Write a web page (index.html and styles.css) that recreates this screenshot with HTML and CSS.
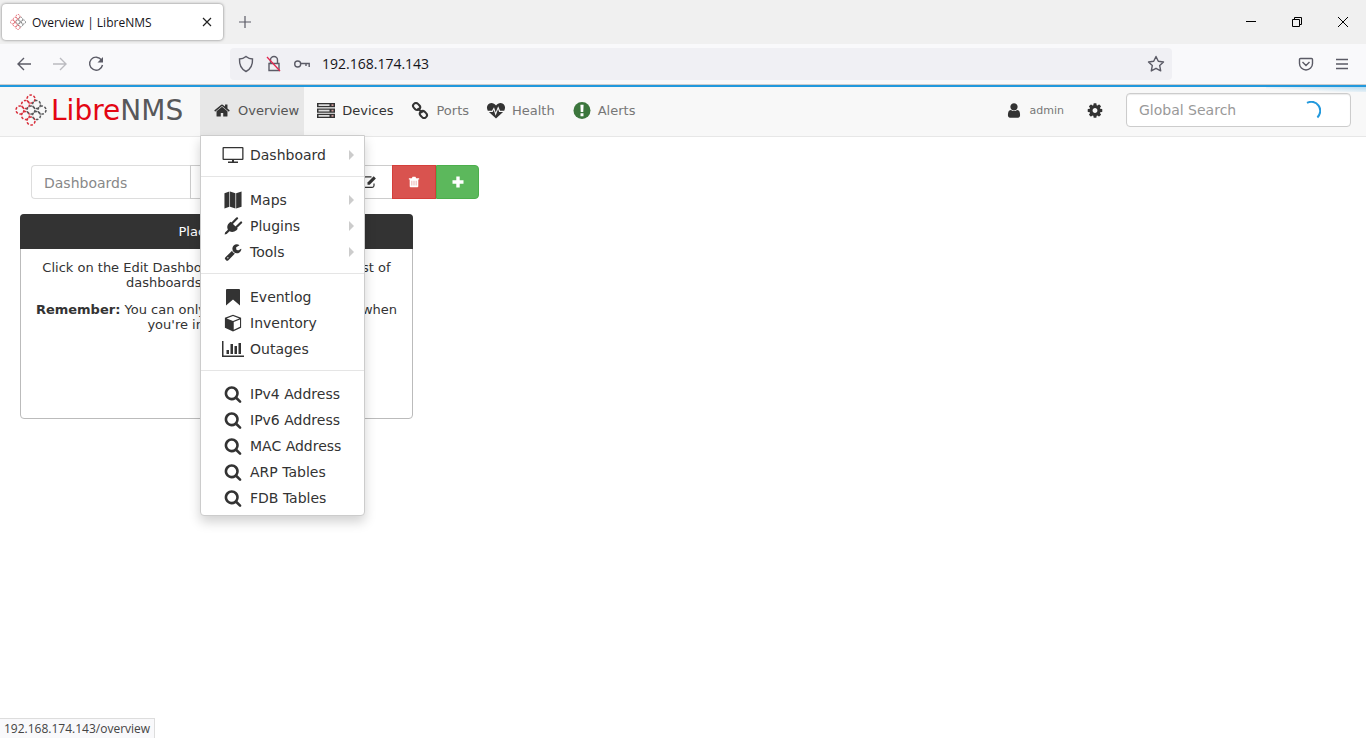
FILE: index.html
```
<!DOCTYPE html>
<html lang="en">
	<head>
		<meta charset="utf-8" />
		<title>Overview | LibreNMS</title>
		<link rel="stylesheet" href="styles.css">
	</head>

	<body>
	<!-- shared icons -->
	<svg class="sprite" aria-hidden="true">
		<symbol id="i-logo" viewBox="0 0 32 32">
			<g fill="none" stroke-width="1.500" stroke-dasharray="2.600 1.590">
				<g stroke="#d9303c">
					<circle cx="16" cy="5" r="4"/>
					<circle cx="10.500" cy="10.500" r="4"/>
					<circle cx="5" cy="16" r="4"/>
					<circle cx="10.500" cy="21.500" r="4"/>
					<circle cx="16" cy="27" r="4"/>
				</g>
				<g stroke="#57585a">
					<circle cx="21.500" cy="10.500" r="4"/>
					<circle cx="16" cy="16" r="4"/>
					<circle cx="27" cy="16" r="4"/>
					<circle cx="21.500" cy="21.500" r="4"/>
				</g>
			</g>
		</symbol>
		<symbol id="i-home" viewBox="0 0 1792 1792"><path d="M1472 992v480q0 26-19 45t-45 19h-384v-384h-256v384h-384q-26 0-45-19t-19-45v-480q0-1 .5-3t.5-3l575-474 575 474q1 2 1 6zm223-69l-62 74q-8 9-21 11h-3q-13 0-21-7l-692-577-692 577q-12 8-24 7-13-2-21-11l-62-74q-8-10-7-23.500t11-21.500l719-599q32-26 76-26t76 26l244 204v-195q0-14 9-23t23-9h192q14 0 23 9t9 23v408l219 182q10 8 11 21.500t-7 23.500z"/></symbol>
		<symbol id="i-server" viewBox="0 0 20 16"><path d="M1 .5h18v4.300H1zM1 5.900h18v4.300H1zM1 11.300h18v4.300H1z"/><path fill="#ddd" d="M2.500 1.800h11v1.700h-11zM2.500 7.200h11v1.700h-11zM2.500 12.600h11v1.700h-11z"/><path fill="#c99" d="M15.500 1.800h2v1.700h-2zM15.500 7.200h2v1.700h-2zM15.500 12.600h2v1.700h-2z"/></symbol>
		<symbol id="i-link" viewBox="0 0 18 18"><g fill="none" stroke="currentColor" stroke-width="2.200"><rect x="1.400" y="1.800" width="8" height="6" rx="3" transform="rotate(45 5.400 4.800)"/><rect x="8.600" y="10.200" width="8" height="6" rx="3" transform="rotate(45 12.600 13.200)"/><path d="M6.500 6.500l5 5"/></g></symbol>
		<symbol id="i-heart" viewBox="0 0 20 18"><path d="M10 17.500L2.500 10.500H6.500L7.600 8.200L9.600 14.500L12.200 7.500L13.300 10.500H17.500zM1.300 9.200C-.8 5.500 1 1 5 1c2.200 0 3.700 1 5 2.600C11.300 2 12.800 1 15 1c4 0 5.800 4.500 3.700 8.200H14.300L12.300 4.500L9.700 11L7.900 5.500L5.700 9.200z"/></symbol>
		<symbol id="i-alert" viewBox="0 0 16 16"><circle cx="8" cy="8" r="8"/><path fill="#fff" d="M6.500 2.500h3l-.3 6.900H6.800zM6.600 10.600h2.800v2.700H6.600z"/></symbol>
		<symbol id="i-user" viewBox="0 0 1792 1792"><path d="M1536 1399q0 109-62.500 187t-150.500 78h-854q-88 0-150.500-78t-62.500-187q0-85 8.500-160.500t31.500-152 58.500-131 94-89 134.500-34.500q131 128 313 128t313-128q76 0 134.500 34.500t94 89 58.500 131 31.500 152 8.500 160.500zm-256-887q0 159-112.500 271.500t-271.500 112.500-271.500-112.500-112.500-271.500 112.500-271.500 271.500-112.500 271.500 112.500 112.500 271.500z"/></symbol>
		<symbol id="i-cog" viewBox="0 0 1792 1792"><path d="M1152 896q0-106-75-181t-181-75-181 75-75 181 75 181 181 75 181-75 75-181zm512-109v222q0 12-8 23t-20 13l-185 28q-19 54-39 91 35 50 107 138 10 12 10 25t-9 23q-27 37-99 108t-94 71q-12 0-26-9l-138-108q-44 23-91 38-16 136-29 186-7 28-36 28h-222q-14 0-24.500-8.500t-11.500-21.500l-28-184q-49-16-90-37l-141 107q-10 9-25 9-14 0-25-11-126-114-165-168-7-10-7-23 0-12 8-23 15-21 51-66.500t54-70.500q-27-50-41-99l-183-27q-13-2-21-12.500t-8-23.500v-222q0-12 8-23t19-13l186-28q14-46 39-92-40-57-107-138-10-12-10-24 0-10 9-23 26-36 98.500-107.500t94.500-71.500q13 0 26 10l138 107q44-23 91-38 16-136 29-186 7-28 36-28h222q14 0 24.500 8.500t11.500 21.500l28 184q49 16 90 37l142-107q9-9 24-9 13 0 25 10 129 119 165 170 7 8 7 22 0 12-8 23-15 21-51 66.500t-54 70.500q26 50 41 98l183 28q13 2 21 12.500t8 23.500z"/></symbol>
		<symbol id="i-desktop" viewBox="0 0 22 18"><path fill-rule="evenodd" d="M1.500 1h19q1 0 1 1v11q0 1-1 1h-8.500v1.500h4V17H6v-1.500h4V14H1.500q-1 0-1-1V2q0-1 1-1zM1.800 2.300v10.400h18.400V2.300z"/></symbol>
		<symbol id="i-map" viewBox="0 0 20 20"><path d="M.5 2.500L6 .5v17l-5.500 2zM6.700.5l6 2v17l-6-2zM13.500 2.500l6-2v17l-6 2z"/></symbol>
		<symbol id="i-plug" viewBox="0 0 20 20"><path d="M6 6.500l1.500-1.200 7.800 7.700-1.400 1.600q-3.900 3.300-7.800 1.200L3 18.900l-2.300.6.500-2.300L4.300 14.100q-2-4.100 1.700-7.600z"/><path d="M8.500 7.500L14.500 1.500M13 12l6-6" fill="none" stroke="currentColor" stroke-width="2.400" stroke-linecap="round"/></symbol>
		<symbol id="i-wrench" viewBox="0 0 1792 1792"><path d="M448 1472q0-26-19-45t-45-19-45 19-19 45 19 45 45 19 45-19 19-45zm644-420l-682 682q-37 37-90 37-52 0-91-37l-106-108q-38-36-38-90 0-53 38-91l681-681q39 98 114.500 173.500t173.500 114.500zm634-435q0 39-23 106-47 134-164.500 217.500t-258.500 83.500q-185 0-316.500-131.500t-131.500-316.500 131.500-316.500 316.500-131.500q58 0 121.500 16.500t107.500 46.500q16 11 16 28t-16 28l-293 169v224l193 107q5-3 79-48.500t135.500-81 70.500-35.500q15 0 23.500 10t8.500 25z"/></symbol>
		<symbol id="i-bookmark" viewBox="0 0 14 18"><path d="M1 1h12q1 0 1 1v15.500L7 11.500 0 17.500V2q0-1 1-1z"/></symbol>
		<symbol id="i-cube" viewBox="0 0 20 20"><path fill-rule="evenodd" d="M10 .8l9 3.500v11L10 19.500 1 15.300v-11zM10 2.200L3 4.900l7 2.800 7-2.800zM10.800 9v8.500l7-3.200V6.200z"/></symbol>
		<symbol id="i-chart" viewBox="0 0 22 18"><path d="M0 1h1.500v14.500H22V17H0zM4.500 10H7v4H4.500zM8.500 4H11v10H8.500zM12.500 6H15v8h-2.500zM16.500 3H19v11h-2.500z"/></symbol>
		<symbol id="i-search" viewBox="0 0 1792 1792"><path d="M1216 832q0-185-131.500-316.500t-316.500-131.500-316.500 131.500-131.500 316.500 131.500 316.500 316.500 131.500 316.500-131.500 131.500-316.500zm512 832q0 52-38 90t-90 38q-54 0-90-38l-343-342q-179 124-399 124-143 0-273.500-55.500t-225-150-150-225-55.500-273.500 55.500-273.500 150-225 225-150 273.500-55.500 273.500 55.500 225 150 150 225 55.500 273.500q0 220-124 399l343 343q37 37 37 90z"/></symbol>
		<symbol id="i-edit" viewBox="0 0 14 14"><path d="M11 8.500v2q0 1.800-1.800 1.800H2.500Q.8 12.300.8 10.500v-7Q.8 1.800 2.500 1.800h6" fill="none" stroke="currentColor" stroke-width="1.200"/><path d="M4.500 7.500L10.700 1.300l2.200 2.200-6.200 6.200H4.500z"/></symbol>
		<symbol id="i-trash" viewBox="0 0 12 14"><path fill-rule="evenodd" d="M4.300 1h3.400l.8 1.500H12V4h-1v8q0 1-1 1H2q-1 0-1-1V4H0V2.500h3.500z"/><path fill="#e5a5a3" d="M3 5.500h1v5.500H3zM5.500 5.500h1v5.500h-1zM8 5.500h1v5.500H8z"/></symbol>
		<symbol id="i-plus" viewBox="0 0 12 12"><path d="M4.300.5h3.400v3.800h3.800v3.400H7.700v3.800H4.300V7.700H.5V4.300h3.800z"/></symbol>
	</svg>

	<!-- browser window -->
	<div class="tabbar">
		<div class="tab">
			<svg class="favicon"><use href="#i-logo"/></svg>
			<span class="tab-title">Overview | LibreNMS</span>
			<button class="plain" aria-label="Close tab"><svg width="16" height="16" viewBox="0 0 16 16"><path d="M4 4l8 8M12 4l-8 8" stroke="#222" stroke-width="1.200"/></svg></button>
		</div>
		<button class="plain newtab" aria-label="New tab"><svg width="16" height="16" viewBox="0 0 16 16"><path d="M8 2v12M2 8h12" stroke="#5b5b66" stroke-width="1.200"/></svg></button>
		<div class="window-buttons">
			<button class="plain" aria-label="Minimize"><svg width="12" height="12" viewBox="0 0 12 12"><path d="M1 5.500h10" stroke="#000"/></svg></button>
			<button class="plain" aria-label="Restore"><svg width="12" height="12" viewBox="0 0 12 12"><path d="M1.500 3.500h7v7h-7zM3.500 3V1.500h7v7H9" fill="none" stroke="#000"/></svg></button>
			<button class="plain" aria-label="Close"><svg width="12" height="12" viewBox="0 0 12 12"><path d="M1 1l10 10M11 1L1 11" stroke="#000"/></svg></button>
		</div>
	</div>
	<div class="toolbar">
		<div class="history">
			<button class="plain" aria-label="Back"><svg width="16" height="16" viewBox="0 0 16 16"><path d="M15 8H2M8 2L2 8l6 6" fill="none" stroke="#5b5b66" stroke-width="1.400"/></svg></button>
			<button class="plain" aria-label="Forward"><svg width="16" height="16" viewBox="0 0 16 16"><path d="M1 8h13M8 2l6 6-6 6" fill="none" stroke="#bbbbc0" stroke-width="1.400"/></svg></button>
			<button class="plain" aria-label="Reload"><svg width="16" height="16" viewBox="0 0 16 16"><path d="M13.500 4A6.500 6.500 0 1 0 14.500 9" fill="none" stroke="#5b5b66" stroke-width="1.400"/><path d="M15 1v5.500H9.500z" fill="#5b5b66"/></svg></button>
		</div>
		<div class="urlbar">
			<svg width="16" height="18" viewBox="0 0 16 18"><path d="M8 1.500q3 2.500 6.500 2.500Q15 13 8 16.500 1 13 1.500 4 5 4 8 1.500z" fill="none" stroke="#5b5b66" stroke-width="1.400"/></svg>
			<svg width="16" height="18" viewBox="0 0 16 18"><path d="M4.500 8V5a3.500 3.500 0 0 1 7 0v3M3 8.500h10v7H3z" fill="none" stroke="#5b5b66" stroke-width="1.400"/><path d="M1 2l13 14" stroke="#e22850" stroke-width="1.300"/></svg>
			<svg width="16" height="18" viewBox="0 0 16 18"><path d="M.7 9a3 3 0 1 0 6 0a3 3 0 1 0-6 0M6.700 8.500h8.500V12M12 8.500V11" fill="none" stroke="#5b5b66" stroke-width="1.400"/></svg>
			<input type="text" aria-label="Address" value="192.168.174.143">
			<button class="plain" aria-label="Bookmark"><svg width="18" height="18" viewBox="0 0 18 18"><path d="M9 1.500l2.300 4.800 5.200.7-3.800 3.600 1 5.300L9 13.300l-4.700 2.600 1-5.300L1.500 7l5.200-.7z" fill="none" stroke="#5b5b66" stroke-width="1.400" stroke-linejoin="round"/></svg></button>
		</div>
		<div class="tools">
			<button class="plain" aria-label="Pocket"><svg width="16" height="16" viewBox="0 0 16 16"><path d="M2.500 2.500h11q1 0 1 1V7.500a6.500 6.500 0 0 1-13 0V3.500q0-1 1-1zM4.500 6L8 9.500 11.500 6" fill="none" stroke="#5b5b66" stroke-width="1.400"/></svg></button>
			<button class="plain" aria-label="Menu"><svg width="16" height="16" viewBox="0 0 16 16"><path d="M2 3.500h12M2 8h12M2 12.500h12" stroke="#5b5b66" stroke-width="1.400"/></svg></button>
		</div>
	</div>

	<!-- LibreNMS navigation -->
	<nav class="navbar">
		<a class="brand" href="#"><svg class="logo"><use href="#i-logo"/></svg><span><b>Libre</b>NMS</span></a>
		<ul class="nav">
			<li class="open">
				<a href="#"><svg><use href="#i-home"/></svg>Overview</a>
				<ul class="dropdown">
					<li><a href="#"><svg><use href="#i-desktop"/></svg>Dashboard<i class="caret"></i></a></li>
					<li class="divider"></li>
					<li><a href="#"><svg><use href="#i-map"/></svg>Maps<i class="caret"></i></a></li>
					<li><a href="#"><svg><use href="#i-plug"/></svg>Plugins<i class="caret"></i></a></li>
					<li><a href="#"><svg><use href="#i-wrench"/></svg>Tools<i class="caret"></i></a></li>
					<li class="divider"></li>
					<li><a href="#"><svg><use href="#i-bookmark"/></svg>Eventlog</a></li>
					<li><a href="#"><svg><use href="#i-cube"/></svg>Inventory</a></li>
					<li><a href="#"><svg><use href="#i-chart"/></svg>Outages</a></li>
					<li class="divider"></li>
					<li><a href="#"><svg><use href="#i-search"/></svg>IPv4 Address</a></li>
					<li><a href="#"><svg><use href="#i-search"/></svg>IPv6 Address</a></li>
					<li><a href="#"><svg><use href="#i-search"/></svg>MAC Address</a></li>
					<li><a href="#"><svg><use href="#i-search"/></svg>ARP Tables</a></li>
					<li><a href="#"><svg><use href="#i-search"/></svg>FDB Tables</a></li>
				</ul>
			</li>
			<li class="hover"><a href="#"><svg><use href="#i-server"/></svg>Devices</a></li>
			<li><a href="#"><svg><use href="#i-link"/></svg>Ports</a></li>
			<li><a href="#"><svg><use href="#i-heart"/></svg>Health</a></li>
			<li><a href="#"><svg class="ok"><use href="#i-alert"/></svg>Alerts</a></li>
		</ul>
		<div class="nav-right">
			<a class="user" href="#"><svg><use href="#i-user"/></svg>admin</a>
			<a href="#" aria-label="Settings"><svg><use href="#i-cog"/></svg></a>
			<form class="search">
				<input type="search" placeholder="Global Search" aria-label="Global Search">
				<svg class="spinner" viewBox="0 0 20 20"><path d="M6 1.900A9 9 0 0 1 16.400 16.400" fill="none" stroke="#29d" stroke-width="2"/></svg>
			</form>
		</div>
	</nav>

	<main>
		<div class="dash-bar">
			<input class="dash-label" type="text" placeholder="Dashboards" aria-label="Dashboards" disabled>
			<select aria-label="Dashboard"><option></option></select>
			<button class="btn" aria-label="Edit dashboard"><svg><use href="#i-edit"/></svg></button>
			<button class="btn red" aria-label="Remove dashboard"><svg><use href="#i-trash"/></svg></button>
			<button class="btn green" aria-label="New dashboard"><svg><use href="#i-plus"/></svg></button>
		</div>
		<section class="widget">
			<header>Placeholder</header>
			<div class="widget-body">
				<p>Click on the Edit Dashboard button (next to the list of dashboards) to add widgets</p>
				<p><b>Remember:</b> You can only move &amp; resize widgets when you're in <b>Edit Mode</b>.</p>
			</div>
		</section>
	</main>
	<div class="status">192.168.174.143/overview</div>
	</body>
</html>
```
FILE: styles.css
```
*{
	box-sizing: border-box;
}
body{
	min-height: 100vh;
	margin: 0;
	background: #fff;
	color: #333;
	font: 14px "DejaVu Sans", sans-serif;
}
a{
	color: inherit;
	text-decoration: none;
}
ul{
	margin: 0;
	padding: 0;
	list-style: none;
}
svg{
	flex: none;
	fill: currentColor;
}
.sprite{
	position: absolute;
	width: 0;
	height: 0;
}
.plain{
	display: flex;
	padding: 0;
	border: 0;
	background: none;
}

/* browser window */
.tabbar{
	display: flex;
	align-items: center;
	height: 44px;
	padding: 0 17px 0 2px;
	background: #f0f0f0;
	font: 12px "Open Sans", sans-serif;
	color: #15141a;
}
.tab{
	display: flex;
	align-items: center;
	width: 221px;
	height: 36px;
	padding: 0 8px;
	border-radius: 4px;
	background: #fff;
	box-shadow: 0 0 3px rgba(0,0,0,.5);
}
.favicon{
	width: 16px;
	height: 16px;
	margin-right: 6px;
}
.tab-title{
	flex: 1;
}
.newtab{
	margin-left: 14px;
}
.window-buttons{
	display: flex;
	gap: 34px;
	margin-left: auto;
}
.toolbar{
	display: flex;
	align-items: center;
	height: 41px;
	padding: 0 16px;
	border-bottom: 1px solid #ccc;
	background: #f9f9fb;
}
.history{
	display: flex;
	gap: 20px;
	width: 214px;
}
.urlbar{
	display: flex;
	align-items: center;
	flex: 1;
	gap: 12px;
	height: 32px;
	padding: 0 7px 0 8px;
	border-radius: 4px;
	background: #f0f0f4;
}
.urlbar input{
	flex: 1;
	min-width: 0;
	padding: 0 0 2px;
	border: 0;
	background: none;
	color: #15141a;
	font: 14px "Open Sans", sans-serif;
}
.tools{
	display: flex;
	justify-content: flex-end;
	gap: 20px;
	width: 178px;
}

/* navigation */
.navbar{
	position: relative;
	display: flex;
	height: 52px;
	padding-right: 15px;
	border-top: 2px solid #29d;
	border-bottom: 1px solid #e7e7e7;
	background: #f8f8f8;
	color: #777;
}
.navbar::after{
	content: "";
	position: absolute;
	top: 0;
	right: 0;
	width: 100px;
	height: 5px;
	background: linear-gradient(to bottom left, rgba(34,153,221,.3), transparent 70%);
}
.brand{
	display: flex;
	align-items: center;
	gap: 4px;
	width: 200px;
	padding: 0 0 3px 15px;
	color: #58585a;
	font-size: 28px;
}
.brand b{
	color: #e30613;
	font-weight: 400;
}
.logo{
	width: 32px;
	height: 32px;
}
.nav{
	display: flex;
	height: 49px;
}
.nav > li{
	position: relative;
}
.nav > li > a{
	display: flex;
	align-items: center;
	gap: 6px;
	height: 48px;
	padding: 0 5px 2px 12px;
	font-size: 13px;
}
.nav > li > a svg,
.nav-right a svg{
	width: 20px;
	height: 17px;
	color: #333;
}
.nav > .open > a{
	background: #e7e7e7;
	color: #555;
}
.nav > .hover > a{
	color: #333;
}
.nav > li > a .ok{
	color: #3c763d;
}
.dropdown{
	position: absolute;
	top: 48px;
	left: 0;
	z-index: 10;
	width: 165px;
	padding: 5px 0;
	border: 1px solid #ccc;
	border-radius: 0 0 4px 4px;
	background: #fff;
	box-shadow: 0 6px 12px rgba(0,0,0,.18);
	color: #333;
}
.dropdown a{
	display: flex;
	align-items: center;
	gap: 6px;
	height: 26px;
	padding: 2px 10px 0 21px;
}
.dropdown svg{
	width: 22px;
	height: 18px;
}
.dropdown .caret{
	margin-left: auto;
	border: 5px solid transparent;
	border-left-color: #ccc;
	border-right: 0;
}
.dropdown .divider{
	height: 1px;
	margin: 9px 0;
	background: #e5e5e5;
}
.nav-right{
	display: flex;
	align-items: center;
	gap: 21px;
	margin-left: auto;
	padding-bottom: 3px;
}
.nav-right a{
	display: flex;
	align-items: center;
	gap: 6px;
}
.nav-right .user{
	font-size: 11px;
}
.search{
	position: relative;
	width: 225px;
	height: 34px;
}
.search input{
	width: 100%;
	height: 34px;
	padding: 0 12px;
	border: 1px solid #ccc;
	border-radius: 4px;
	background: #fff;
	box-shadow: inset 0 1px 1px rgba(0,0,0,.08);
	font: 14px "DejaVu Sans", sans-serif;
}
.search input::placeholder{
	color: #999;
}
.spinner{
	position: absolute;
	top: 8px;
	right: 30px;
	width: 20px;
	height: 20px;
}

/* dashboard */
main{
	padding: 28px 20px;
}
.dash-bar{
	display: flex;
	margin: 0 11px 15px;
}
.dash-label{
	width: 159px;
	height: 34px;
	padding: 2px 12px 0;
	border: 1px solid #ddd;
	border-right: 0;
	border-radius: 4px 0 0 4px;
	background: #fff;
	font: 14px "DejaVu Sans", sans-serif;
}
.dash-label::placeholder{
	color: #888;
}
.dash-bar select{
	width: 158px;
	border: 1px solid #ccc;
	background: #fff;
}
.btn{
	display: flex;
	align-items: center;
	justify-content: center;
	width: 44px;
	height: 34px;
	border: 1px solid #ccc;
	border-width: 1px 0;
	background: #fff;
	color: #333;
}
.btn svg{
	width: 14px;
	height: 14px;
}
.btn.red{
	border: 1px solid #d43f3a;
	background: #d9534f;
	color: #fff;
}
.btn.green{
	width: 43px;
	border: 1px solid #4cae4c;
	border-radius: 0 4px 4px 0;
	background: #5cb85c;
	color: #fff;
}
.btn.red svg,
.btn.green svg{
	height: 12px;
}
.widget{
	width: 393px;
	min-height: 205px;
	border: 1px solid #bbb;
	border-radius: 4px;
	font-size: 13px;
	text-align: center;
}
.widget header{
	margin: -1px -1px 0;
	border-radius: 4px 4px 0 0;
	background: #333;
	color: #fff;
	line-height: 35px;
}
.widget-body{
	padding: 11px 10px;
	line-height: 15px;
}
.widget-body p{
	margin: 0 0 12px;
}
.status{
	position: fixed;
	bottom: 0;
	left: 0;
	height: 20px;
	padding: 0 4px;
	border: 1px solid #ddd;
	border-width: 1px 1px 0 0;
	background: #f9f9fb;
	color: #444;
	font: 12px "Open Sans", sans-serif;
	line-height: 19px;
}
```
